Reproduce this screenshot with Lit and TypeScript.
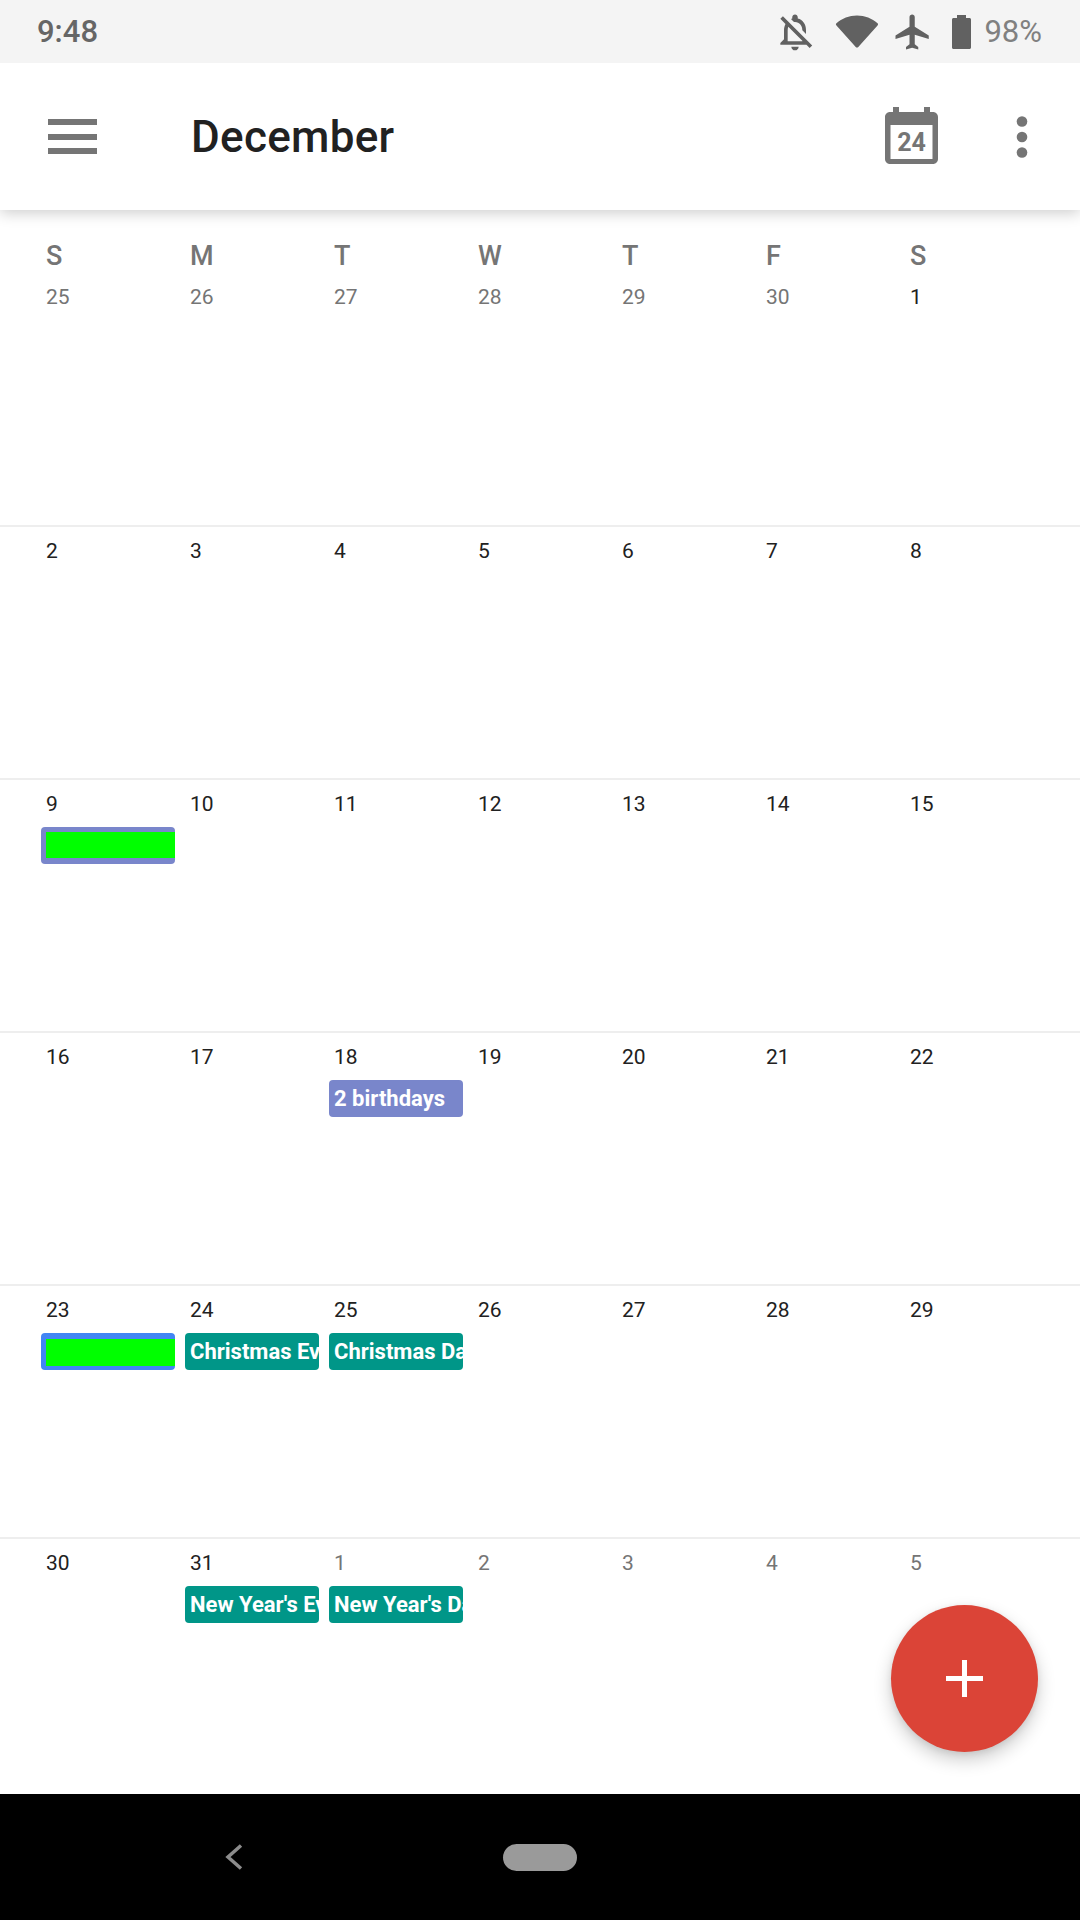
import { LitElement, html, css, nothing } from 'lit';
import { customElement } from 'lit/decorators.js';

type Chip = { text?: string; color: 'purple' | 'teal' | 'blue' };
type Day = { n: number; muted?: boolean; chip?: Chip };

const d = (n: number, chip?: Chip): Day => ({ n, chip });
const m = (n: number, chip?: Chip): Day => ({ n, muted: true, chip });

const DAYS = ['S', 'M', 'T', 'W', 'T', 'F', 'S'];

const WEEKS: Day[][] = [
	[m(25), m(26), m(27), m(28), m(29), m(30), d(1)],
	[d(2), d(3), d(4), d(5), d(6), d(7), d(8)],
	[d(9, { color: 'purple' }), d(10), d(11), d(12), d(13), d(14), d(15)],
	[d(16), d(17), d(18, { text: '2 birthdays', color: 'purple' }), d(19), d(20), d(21), d(22)],
	[
		d(23, { color: 'blue' }),
		d(24, { text: 'Christmas Eve', color: 'teal' }),
		d(25, { text: 'Christmas Day', color: 'teal' }),
		d(26),
		d(27),
		d(28),
		d(29),
	],
	[
		d(30),
		d(31, { text: "New Year's Eve", color: 'teal' }),
		m(1, { text: "New Year's Day", color: 'teal' }),
		m(2),
		m(3),
		m(4),
		m(5),
	],
];

@customElement('app-root')
export class AppRoot extends LitElement {
	static styles = css`
		:host {
			display: block;
			position: relative;
			width: 1080px;
			height: 1920px;
			overflow: hidden;
			background: #fff;
			font-family: Roboto, 'Liberation Sans', sans-serif;
		}

		.page {
			display: flex;
			flex-direction: column;
			height: 100%;
		}

		.status {
			flex: none;
			position: relative;
			z-index: 2;
			height: 63px;
			padding: 0 38px 0 37px;
			display: flex;
			align-items: center;
			background: #f4f4f4;
			color: #616161;
		}

		.time {
			font-size: 31px;
			font-weight: 500;
			color: #666;
		}

		.status-icons {
			margin-left: auto;
			display: flex;
			align-items: center;
		}

		.status-icons svg {
			display: block;
			fill: #616161;
		}

		.bell {
			width: 44px;
			height: 44px;
			margin-right: 18px;
		}

		.wifi {
			width: 44px;
			height: 44px;
			margin-right: 13px;
		}

		.plane {
			width: 42px;
			height: 42px;
			margin-right: 18px;
		}

		.battery {
			width: 19px;
			height: 34px;
			margin-right: 13px;
		}

		.percent {
			font-size: 31px;
			color: #808080;
		}

		.bar {
			flex: none;
			position: relative;
			z-index: 1;
			height: 147px;
			display: flex;
			align-items: center;
			background: #fff;
			box-shadow: 0 3px 14px rgba(0, 0, 0, 0.2);
		}

		.menu {
			display: block;
			width: 49px;
			height: 36px;
			margin-left: 48px;
			fill: #757575;
		}

		.title {
			margin-left: 94px;
			font-size: 44px;
			font-weight: 500;
			letter-spacing: 0.3px;
			color: #212121;
		}

		.today {
			display: block;
			margin-left: auto;
			margin-bottom: 2px;
			width: 53px;
			height: 57px;
		}

		.today text {
			font-family: Roboto, sans-serif;
			font-size: 25px;
			font-weight: 700;
			fill: #757575;
			text-anchor: middle;
		}

		.more {
			display: block;
			width: 12px;
			height: 42px;
			margin: 0 52px 0 78px;
			fill: #757575;
		}

		.cal {
			flex: 1;
			display: flex;
			flex-direction: column;
		}

		.labels,
		.week {
			display: grid;
			grid-template-columns: repeat(7, 144px);
			padding-left: 41px;
		}

		.labels {
			height: 62px;
			align-items: end;
			font-size: 27px;
			font-weight: 500;
			color: #757575;
		}

		.labels span {
			padding-left: 5px;
			line-height: 30px;
			padding-bottom: 1px;
		}

		.week {
			height: 253px;
			box-sizing: border-box;
			border-top: 2px solid #eeeeee;
		}

		.week.first {
			border-top: none;
		}

		.week.last {
			flex: 1;
		}

		.date {
			display: block;
			height: 47px;
			line-height: 48px;
			padding-left: 5px;
			font-size: 21px;
			color: #212121;
		}

		.date.muted {
			color: #757575;
		}

		.first .date {
			height: 50px;
			line-height: 50px;
		}

		.chip {
			box-sizing: border-box;
			width: 134px;
			height: 37px;
			padding-left: 5px;
			border-radius: 4px;
			overflow: hidden;
			white-space: nowrap;
			line-height: 38px;
			font-size: 22px;
			font-weight: 700;
			color: #fff;
		}

		.chip.purple {
			background: #7986cb;
		}

		.chip.teal {
			background: #009688;
		}

		.chip.blue {
			background: #4285f4;
		}

		.chip.hidden {
			padding-top: 5px;
			padding-bottom: 6px;
		}

		.chip.hidden.blue {
			padding-top: 6px;
			padding-bottom: 4px;
		}

		.mask {
			height: 100%;
			background: #00ff00;
		}

		.fab {
			position: absolute;
			left: 891px;
			top: 1605px;
			width: 147px;
			height: 147px;
			display: flex;
			align-items: center;
			justify-content: center;
			border-radius: 50%;
			background: #db4437;
			box-shadow: 0 8px 18px rgba(0, 0, 0, 0.2), 0 2px 6px rgba(0, 0, 0, 0.08);
		}

		.fab svg {
			display: block;
			width: 37px;
			height: 37px;
			fill: #fff;
		}

		.nav {
			flex: none;
			height: 126px;
			display: flex;
			align-items: center;
			background: #000;
		}

		.back {
			display: block;
			width: 18px;
			height: 26px;
			margin-left: 225px;
		}

		.home {
			width: 74px;
			height: 27px;
			margin-left: 260px;
			border-radius: 14px;
			background: #9a9a9a;
		}
	`;

	renderChip(chip: Chip) {
		if (chip.text) {
			return html`<div class="chip ${chip.color}">${chip.text}</div>`;
		}
		// this event title is covered by a solid block in the screenshot
		return html`<div class="chip hidden ${chip.color}"><div class="mask"></div></div>`;
	}

	render() {
		return html`<div class="page">
				<div class="status">
					<span class="time">9:48</span>
					<div class="status-icons">
						<svg class="bell" viewBox="0 0 24 24">
							<path
								d="M12 22c1.1 0 2-.9 2-2h-4c0 1.1.9 2 2 2zM12 6.5c2.49 0 4 2.02 4 4.5v.1l2 2V11c0-3.07-1.63-5.64-4.5-6.32V4c0-.83-.67-1.5-1.5-1.5s-1.5.67-1.5 1.5v.68c-.24.06-.47.15-.69.23l1.64 1.64c.18-.02.36-.05.55-.05zM5.41 3.35L4 4.76l2.81 2.81C6.29 8.57 6 9.74 6 11v5l-2 2v1h14.24l1.74 1.74 1.41-1.41L5.41 3.35zM16 17H8v-6c0-.68.12-1.32.34-1.9L16 16.76V17z"
							/>
						</svg>
						<svg class="wifi" viewBox="0 0 24 24">
							<path
								d="M23.2 7.200C20.200 4.600 16.300 3 12 3S3.800 4.600.8 7.200c-.4.300-.4.800 0 1.200l10.500 11.800c.4.400 1 .4 1.400 0L23.200 8.400c.4-.4.4-.9 0-1.200z"
							/>
						</svg>
						<svg class="plane" viewBox="0 0 24 24">
							<path
								d="M21 16v-2l-8-5V3.500c0-.83-.67-1.500-1.500-1.500S10 2.670 10 3.500V9l-8 5v2l8-2.500V19l-2 1.500V22l3.500-1 3.500 1v-1.500L13 19v-5.500l8 2.500z"
							/>
						</svg>
						<svg class="battery" viewBox="0 0 19 34">
							<path
								d="M5 0h9v3h3.500c.8 0 1.500.7 1.500 1.500v28c0 .8-.7 1.500-1.500 1.500h-16C.7 34 0 33.300 0 32.500v-28C0 3.700.7 3 1.500 3H5z"
							/>
						</svg>
						<span class="percent">98%</span>
					</div>
				</div>
				<div class="bar">
					<svg class="menu" viewBox="0 0 49 36">
						<rect y="0" width="49" height="6" />
						<rect y="15" width="49" height="6" />
						<rect y="29" width="49" height="6" />
					</svg>
					<span class="title">December</span>
					<svg class="today" viewBox="0 0 53 57">
						<path
							fill="#757575"
							fill-rule="evenodd"
							d="M8 0h6v5h25V0h6v5h3c2.800 0 5 2.200 5 5v42c0 2.800-2.200 5-5 5H5c-2.800 0-5-2.200-5-5V10c0-2.800 2.200-5 5-5h3zM5.500 18v34h42V18z"
						/>
						<text x="26.500" y="44">24</text>
					</svg>
					<svg class="more" viewBox="0 0 12 42">
						<circle cx="6" cy="5.500" r="5.300" />
						<circle cx="6" cy="21" r="5.300" />
						<circle cx="6" cy="36.500" r="5.300" />
					</svg>
				</div>
				<div class="cal">
					<div class="labels">${DAYS.map((l) => html`<span>${l}</span>`)}</div>
					${WEEKS.map(
						(week, i) => html`<div
							class="week ${i === 0 ? 'first' : ''} ${i === WEEKS.length - 1 ? 'last' : ''}"
						>
							${week.map(
								(day) => html`<div>
									<span class="date ${day.muted ? 'muted' : ''}">${day.n}</span>
									${day.chip ? this.renderChip(day.chip) : nothing}
								</div>`
							)}
						</div>`
					)}
				</div>
				<div class="nav">
					<svg class="back" viewBox="0 0 18 26">
						<path d="M16 1.500L3 13 16 24.500" fill="none" stroke="#8c8c8c" stroke-width="3.500" />
					</svg>
					<div class="home"></div>
				</div>
			</div>
			<div class="fab">
				<svg viewBox="0 0 37 37">
					<rect x="16" width="5" height="37" />
					<rect y="16" width="37" height="5" />
				</svg>
			</div>`;
	}
}
